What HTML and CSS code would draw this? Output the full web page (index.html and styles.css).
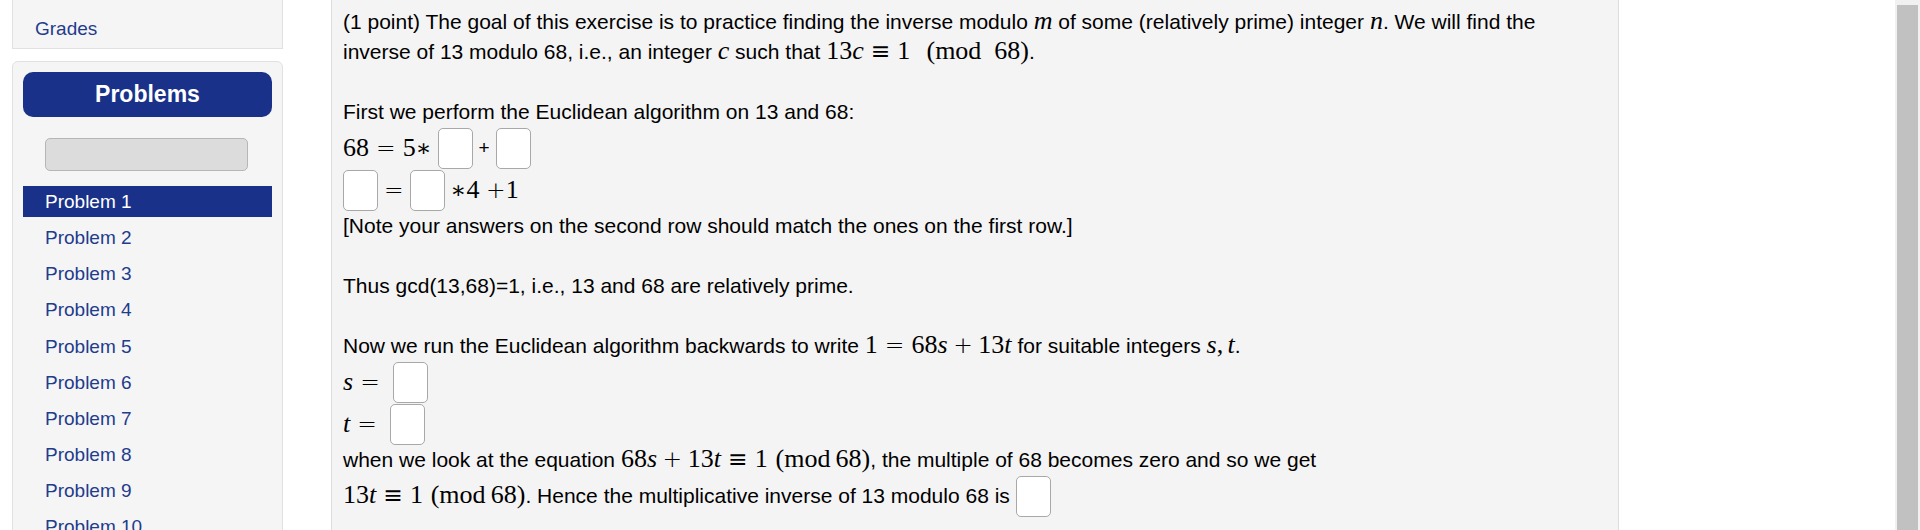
FILE: index.html
```html
<!DOCTYPE html>
<html lang="en">
<head>
<meta charset="utf-8">
<title>Problem 1</title>
<link rel="stylesheet" href="styles.css">
</head>
<body>
<div class="page">
  <aside class="sidebar">
    <ul class="box links">
      <li><a href="#">User Settings</a></li>
      <li><a href="#">Grades</a></li>
    </ul>
    <div class="box panel">
      <div class="panel-head">Problems</div>
      <div class="search"></div>
      <ul class="plist">
        <li class="active"><a href="#">Problem 1</a></li>
        <li><a href="#">Problem 2</a></li>
        <li><a href="#">Problem 3</a></li>
        <li><a href="#">Problem 4</a></li>
        <li><a href="#">Problem 5</a></li>
        <li><a href="#">Problem 6</a></li>
        <li><a href="#">Problem 7</a></li>
        <li><a href="#">Problem 8</a></li>
        <li><a href="#">Problem 9</a></li>
        <li><a href="#">Problem 10</a></li>
      </ul>
    </div>
  </aside>

  <main class="card">
    <p class="txt">(1 point) The goal of this exercise is to practice finding the inverse modulo <span class="m"><i>m</i></span> of some (relatively prime) integer <span class="m"><i>n</i></span>. We will find the<br>inverse of 13 modulo 68, i.e., an integer <span class="m"><i>c</i></span> such that <span class="m">13<i>c</i><span class="eqv rel">≡</span>1<span class="quad"></span>(mod<span class="sp6"></span>68)</span>.</p>

    <p class="txt gap">First we perform the Euclidean algorithm on 13 and 68:</p>
    <div class="row">
      <span class="m">68<span class="op rel">=</span>5<span class="ast">∗</span></span>
      <span class="ans"></span>
      <span class="plus">+</span>
      <span class="ans"></span>
    </div>
    <div class="row">
      <span class="ans"></span>
      <span class="m"><span class="op">=</span></span>
      <span class="ans"></span>
      <span class="m"><span class="ast">∗</span>4 <span class="op">+</span>1</span>
    </div>
    <p class="txt">[Note your answers on the second row should match the ones on the first row.]</p>

    <p class="txt gap">Thus gcd(13,68)=1, i.e., 13 and 68 are relatively prime.</p>

    <p class="txt gap">Now we run the Euclidean algorithm backwards to write <span class="m">1<span class="op rel">=</span>68<i>s</i><span class="op bin">+</span>13<i>t</i></span> for suitable integers <span class="m"><i>s</i>,<span class="thin"></span><i>t</i></span>.</p>
    <div class="row">
      <span class="m"><i>s</i><span class="op rel">=</span></span>
      <span class="ans"></span>
    </div>
    <div class="row">
      <span class="m"><i>t</i><span class="op rel">=</span></span>
      <span class="ans"></span>
    </div>
    <p class="txt">when we look at the equation <span class="m">68<i>s</i><span class="op bin">+</span>13<i>t</i><span class="eqv rel">≡</span>1<span class="sp8"></span>(mod<span class="sp4"></span>68)</span>, the multiple of 68 becomes zero and so we get</p>
    <div class="row">
      <span class="txt-inline"><span class="m">13<i>t</i><span class="eqv rel">≡</span>1<span class="sp8"></span>(mod<span class="sp4"></span>68)</span>. Hence the multiplicative inverse of 13 modulo 68 is</span>
      <span class="ans"></span>
    </div>
  </main>

  <div class="spacer"></div>

  <div class="scrollbar"><div class="thumb"></div></div>
</div>
</body>
</html>
```

FILE: styles.css
```css
* { box-sizing: border-box; }

html, body {
  margin: 0;
  padding: 0;
  background: #ffffff;
}

body {
  font-family: "Liberation Sans", Arial, sans-serif;
  color: #000;
}

.page {
  display: flex;
  height: 530px;
  overflow: hidden;
}

/* ---------- sidebar ---------- */
.sidebar {
  width: 271px;
  margin-left: 12px;
  flex: none;
  display: flex;
  flex-direction: column;
}

.box {
  background: #f5f5f5;
  border: 1px solid #e1e1e1;
}

.links {
  list-style: none;
  margin: -34px 0 0 0;
  padding: 4px 0 1px 0;
}

.links li + li {
  margin-top: 4px;
}

.links li a {
  display: block;
  padding-left: 22px;
  line-height: 36px;
  font-size: 19px;
  color: #1f3c8d;
  text-decoration: none;
}

.panel {
  margin-top: 12px;
  border-radius: 6px 6px 0 0;
  padding: 10px 10px 0 10px;
  flex: 1;
}

.panel-head {
  height: 45px;
  border-radius: 10px;
  background: #193188;
  color: #fff;
  font-weight: bold;
  font-size: 23px;
  line-height: 45px;
  text-align: center;
}

.search {
  margin: 21px 0 0 22px;
  width: 203px;
  height: 33px;
  background: #dcdcdc;
  border: 1px solid #b6b6b6;
  border-radius: 5px;
}

.plist {
  list-style: none;
  margin: 15px 0 0 0;
  padding: 0;
}

.plist li + li {
  margin-top: 5.15px;
}

.plist li a {
  display: block;
  height: 31px;
  line-height: 31px;
  padding-left: 22px;
  font-size: 19px;
  color: #1f3c8d;
  text-decoration: none;
}

.plist li.active a {
  background: #193188;
  color: #ffffff;
}

/* ---------- problem card ---------- */
.card {
  flex: none;
  width: 1288px;
  margin-left: 48px;
  background: #f4f4f4;
  border-left: 1px solid #dddddd;
  border-right: 1px solid #dddddd;
  padding: 7px 11px 0 11px;
  font-size: 21px;
  line-height: 30px;
}

.txt {
  margin: 0;
  white-space: nowrap;
}

.gap {
  margin-top: 30px;
}

.row {
  display: flex;
  align-items: center;
  height: 42px;
  gap: 6px;
  white-space: nowrap;
}

.txt-inline {
  line-height: 30px;
}

.ans {
  display: inline-block;
  width: 35px;
  height: 41px;
  background: #ffffff;
  border: 1px solid #a8a8a8;
  border-radius: 5px;
  flex: none;
}

.plus {
  font-size: 19px;
}

/* ---------- math ---------- */
.m {
  font-family: "Liberation Serif", "DejaVu Serif", serif;
  font-size: 26px;
  line-height: 1;
}

.m i {
  font-style: italic;
}

.op {
  font-family: "DejaVu Sans", sans-serif;
  font-size: 0.9em;
  font-weight: 300;
}

.eqv {
  font-family: "DejaVu Sans", sans-serif;
  font-size: 0.9em;
  font-weight: normal;
}

.rel {
  padding: 0 0.3em;
}

.bin {
  padding: 0 0.24em;
}

.ast {
  font-family: "DejaVu Serif", serif;
  font-size: 0.9em;
}

.quad { display: inline-block; width: 0.62em; }
.sp6 { display: inline-block; width: 0.5em; }
.sp8 { display: inline-block; width: 0.3em; }
.sp4 { display: inline-block; width: 0.2em; }
.thin { display: inline-block; width: 0.17em; }

/* ---------- page chrome ---------- */
.spacer {
  flex: 1;
}

.scrollbar {
  flex: none;
  width: 25px;
  background: #f1f1f1;
  padding: 5px 2px 0 2px;
}

.thumb {
  height: 100%;
  background: #c1c1c1;
}
```
